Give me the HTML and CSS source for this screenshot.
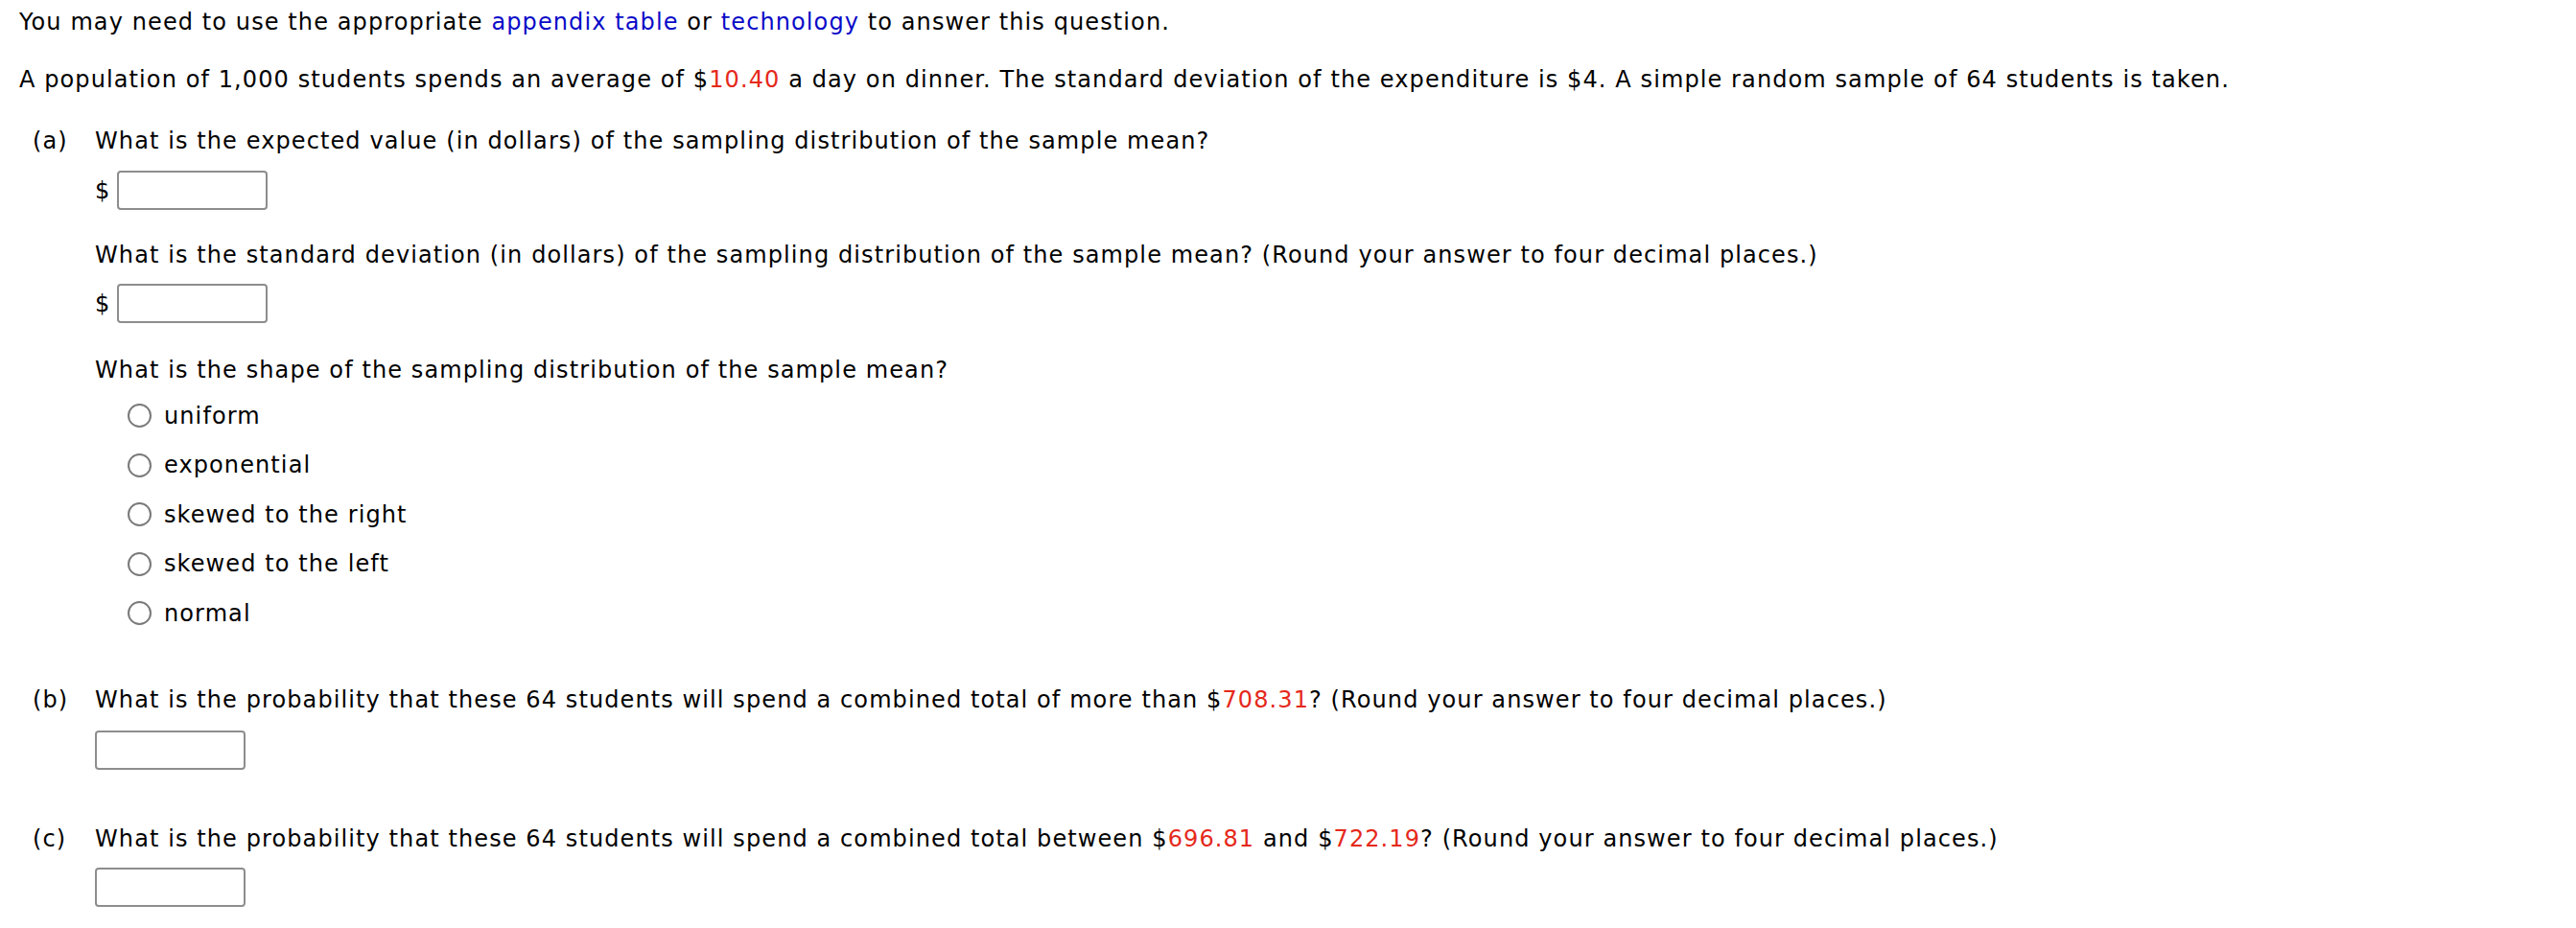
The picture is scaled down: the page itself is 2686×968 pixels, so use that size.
FILE: index.html
```html
<!DOCTYPE html>
<html lang="en">
<head>
<meta charset="utf-8">
<title>Sampling distribution question</title>
<link rel="stylesheet" href="styles.css">
</head>
<body>
<div class="page">
  <p class="intro">You may need to use the appropriate <a class="link" href="#">appendix table</a> or <a class="link" href="#">technology</a> to answer this question.</p>
  <p class="problem">A population of 1,000 students spends an average of $<span class="val">10.40</span> a day on dinner. The standard deviation of the expenditure is $4. A simple random sample of 64 students is taken.</p>

  <div class="part part-a">
    <span class="part-label">(a)</span>
    <div class="part-body">
      <p class="q">What is the expected value (in dollars) of the sampling distribution of the sample mean?</p>
      <div class="answer"><span class="cur">$</span><span class="box"></span></div>
      <p class="q q-gap">What is the standard deviation (in dollars) of the sampling distribution of the sample mean? (Round your answer to four decimal places.)</p>
      <div class="answer answer-tight"><span class="cur">$</span><span class="box"></span></div>
      <p class="q q-gap q-shape">What is the shape of the sampling distribution of the sample mean?</p>
      <ul class="options">
        <li class="option"><span class="radio"></span><span>uniform</span></li>
        <li class="option"><span class="radio"></span><span>exponential</span></li>
        <li class="option"><span class="radio"></span><span>skewed to the right</span></li>
        <li class="option"><span class="radio"></span><span>skewed to the left</span></li>
        <li class="option"><span class="radio"></span><span>normal</span></li>
      </ul>
    </div>
  </div>

  <div class="part part-b">
    <span class="part-label">(b)</span>
    <div class="part-body">
      <p class="q">What is the probability that these 64 students will spend a combined total of more than $<span class="val">708.31</span>? (Round your answer to four decimal places.)</p>
      <div class="answer answer-b"><span class="box"></span></div>
    </div>
  </div>

  <div class="part part-c">
    <span class="part-label">(c)</span>
    <div class="part-body">
      <p class="q">What is the probability that these 64 students will spend a combined total between $<span class="val">696.81</span> and $<span class="val">722.19</span>? (Round your answer to four decimal places.)</p>
      <div class="answer answer-tight"><span class="box"></span></div>
    </div>
  </div>
</div>
</body>
</html>
```

FILE: styles.css
```css
html, body {
  margin: 0;
  padding: 0;
  background: #ffffff;
}

body {
  font-family: "DejaVu Sans", Verdana, sans-serif;
  font-size: 24px;
  line-height: 36px;
  letter-spacing: 1.1px;
  color: #000000;
}

.page {
  padding: 5px 0 0 20px;
}

p {
  margin: 0;
}

.intro {
  margin: 0;
}

.problem {
  margin-top: 24px;
}

.link {
  color: #0a0ac8;
  text-decoration: none;
}

.val {
  color: #e5291b;
}

.part {
  display: flex;
  margin-left: 14px;
}

.part-a {
  margin-top: 28px;
}

.part-b,
.part-c {
  margin-top: 54px;
}

.part-label {
  width: 65px;
  flex: none;
}

.part-body {
  display: flex;
  flex-direction: column;
  align-items: flex-start;
}

.q-gap {
  margin-top: 29px;
}

.q-shape {
  margin-top: 30.5px;
}

.answer {
  display: flex;
  align-items: center;
  margin-top: 13px;
  height: 41px;
}

.answer-tight {
  margin-top: 12px;
}

.answer-b {
  margin-top: 14px;
}

.cur {
  width: 23px;
  flex: none;
}

.box {
  display: block;
  box-sizing: border-box;
  width: 157px;
  height: 41px;
  border: 2px solid #8d8d8d;
  border-radius: 4px;
  background: #ffffff;
}

.options {
  list-style: none;
  margin: 12px 0 0 0;
  padding: 0 0 0 34px;
  display: flex;
  flex-direction: column;
  gap: 15.5px;
}

.option {
  display: flex;
  align-items: center;
  height: 36px;
}

.radio {
  display: block;
  box-sizing: border-box;
  width: 25px;
  height: 25px;
  border: 2px solid #7a7a7a;
  border-radius: 50%;
  margin-right: 13px;
  flex: none;
}
```
